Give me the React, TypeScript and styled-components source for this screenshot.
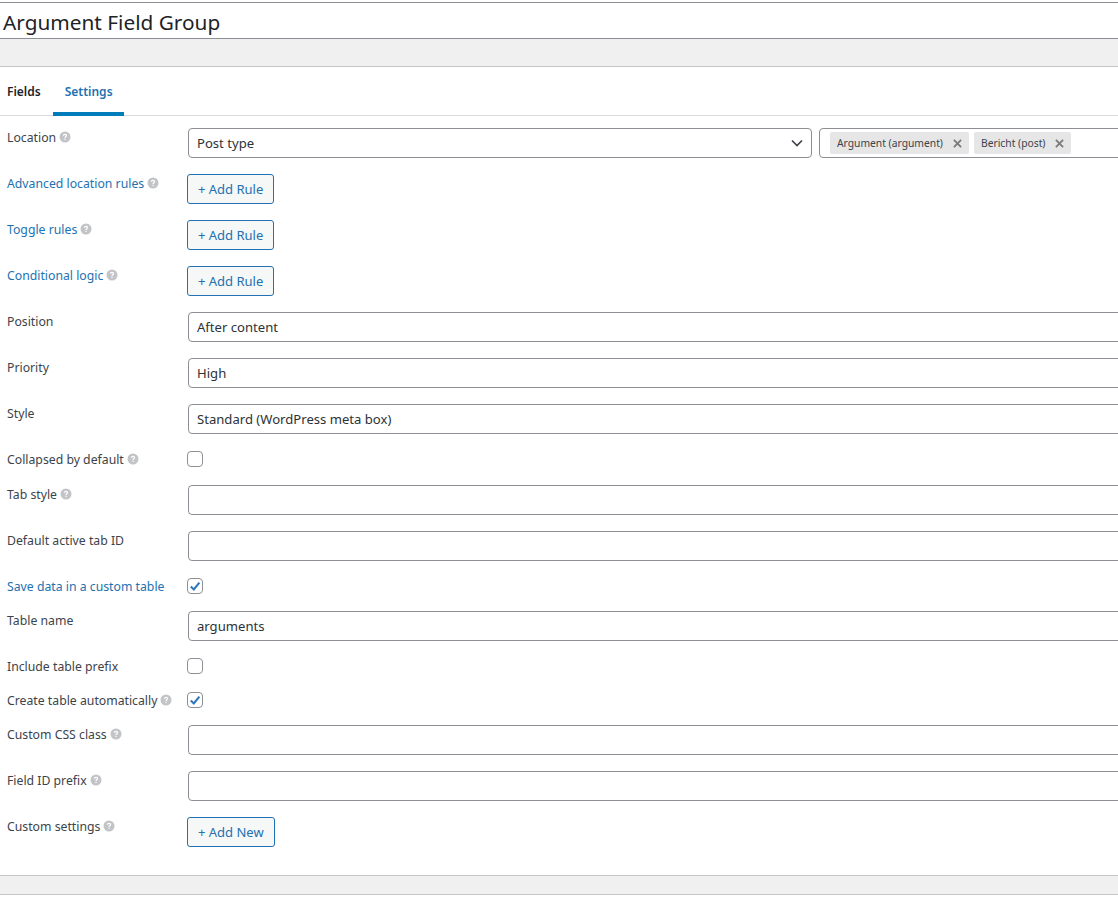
import React from "react";
import styled, { createGlobalStyle } from "styled-components";

const GlobalStyle = createGlobalStyle`
  html, body {
    margin: 0;
    padding: 0;
    background: #fff;
    overflow: hidden;
  }
  body {
    font-family: "Noto Sans", "Open Sans", sans-serif;
    font-size: 13px;
    color: #3c434a;
  }
`;

const Page = styled.div`
  width: 1118px;
  height: 898px;
  overflow: hidden;
  padding-top: 2px;
  box-sizing: border-box;
`;

const TitleBar = styled.header`
  height: 37px;
  box-sizing: border-box;
  border-top: 1px solid #8c8f94;
  border-bottom: 1px solid #8c8f94;
  padding: 2px 0 0 3px;
  display: flex;
  align-items: center;
`;

const Title = styled.h1`
  margin: 0;
  font-size: 20.8px;
  font-weight: 400;
  color: #1d2327;
  line-height: 32px;
`;

const Band = styled.div`
  height: 27px;
  background: #f0f0f0;
`;

const Panel = styled.section`
  border-top: 1px solid #c3c4c7;
  border-bottom: 1px solid #c3c4c7;
`;

const Tabs = styled.nav`
  display: flex;
  height: 49px;
  box-sizing: border-box;
  border-bottom: 1px solid #dcdcde;
`;

const Tab = styled.a<{ $active?: boolean }>`
  box-sizing: border-box;
  height: 49px;
  margin-bottom: -1px;
  padding: ${(p) => (p.$active ? "3px 11px 0 12px" : "3px 12px 0 7px")};
  display: flex;
  align-items: center;
  font-weight: 600;
  font-size: 12px;
  color: ${(p) => (p.$active ? "#2271b1" : "#1d2327")};
  border-bottom: 4px solid ${(p) => (p.$active ? "#007cba" : "transparent")};
`;

const Form = styled.div`
  padding: 12px 0 28px 0;
  display: flex;
  flex-direction: column;
  gap: 16px;
`;

const Row = styled.div<{ $height: number }>`
  display: grid;
  grid-template-columns: 188px 1fr;
  height: ${(p) => p.$height}px;
`;

const Label = styled.div<{ $link?: boolean }>`
  padding: 1px 0 0 7px;
  font-size: 12.25px;
  line-height: 18px;
  color: ${(p) => (p.$link ? "#2271b1" : "#3c434a")};
  display: flex;
  align-items: flex-start;
  gap: 3px;
  white-space: nowrap;
`;

const HelpDot = styled.svg`
  width: 12px;
  height: 12px;
  margin-top: 2px;
  flex: none;
`;

const Control = styled.div`
  display: flex;
  gap: 7px;
  min-width: 0;
`;

const TextField = styled.div`
  box-sizing: border-box;
  width: 960px;
  flex: none;
  height: 30px;
  border: 1px solid #8c8f94;
  border-radius: 4px;
  padding: 0 8px;
  font-size: 13.1px;
  line-height: 28px;
  color: #2c3338;
  background: #fff;
`;

const SelectBox = styled.div`
  box-sizing: border-box;
  width: 624px;
  flex: none;
  height: 30px;
  border: 1px solid #8c8f94;
  border-radius: 4px;
  padding: 0 8px;
  font-size: 13.1px;
  line-height: 28px;
  color: #2c3338;
  display: flex;
  justify-content: space-between;
  align-items: center;
`;

const Chevron = styled.svg`
  width: 14px;
  height: 14px;
  margin-right: -1px;
`;

const MultiBox = styled.div`
  box-sizing: border-box;
  flex: none;
  width: 320px;
  height: 30px;
  border: 1px solid #8c8f94;
  border-radius: 4px;
  padding: 3px 10px;
  display: flex;
  gap: 5px;
`;

const Chip = styled.span`
  height: 22px;
  background: #e6e6e6;
  border-radius: 2px;
  padding: 0 7px;
  display: flex;
  align-items: center;
  gap: 10px;
  font-size: 10.3px;
  color: #3c434a;
  white-space: nowrap;
`;

const ChipX = styled.svg`
  width: 9px;
  height: 9px;
`;

const AddButton = styled.button`
  margin-left: -1px;
  box-sizing: border-box;
  height: 30px;
  padding: 0 10px;
  border: 1px solid #2271b1;
  border-radius: 3px;
  background: #f6f7f7;
  color: #2271b1;
  font-family: inherit;
  font-size: 13px;
  line-height: 28px;
`;

const CheckBox = styled.span`
  box-sizing: border-box;
  display: flex;
  align-items: center;
  justify-content: center;
  width: 16px;
  height: 16px;
  margin-top: 1px;
  margin-left: -1px;
  border: 1px solid #8c8f94;
  border-radius: 4px;
  background: #fff;
`;

const Tick = styled.svg`
  width: 12px;
  height: 12px;
`;

const Footer = styled.div`
  height: 18px;
  background: #f0f0f0;
  border-bottom: 1px solid #c3c4c7;
`;

const Help = () => (
  <HelpDot viewBox="0 0 12 12">
    <circle cx="6" cy="6" r="5.5" fill="#c3c4c7" />
    <path
      d="M4.4 4.8c0-1 .7-1.5 1.6-1.5s1.6.5 1.6 1.3c0 1.2-1.6 1.2-1.6 2.4"
      fill="none"
      stroke="#fff"
      strokeWidth="1.2"
    />
    <rect x="5.4" y="7.8" width="1.2" height="1.2" fill="#fff" />
  </HelpDot>
);

const Caption = ({ text, link, help }: { text: string; link?: boolean; help?: boolean }) => (
  <Label $link={link}>
    {text}
    {help && <Help />}
  </Label>
);

const Check = ({ checked }: { checked?: boolean }) => (
  <CheckBox>
    {checked && (
      <Tick viewBox="0 0 12 12">
        <path d="M1.8 6.4 4.8 9.4 10.4 2.6" fill="none" stroke="#2f78bd" strokeWidth="2.1" />
      </Tick>
    )}
  </CheckBox>
);

const Remove = () => (
  <ChipX viewBox="0 0 10 10">
    <path d="M1 1 9 9M9 1 1 9" stroke="#7a7a7a" strokeWidth="2" />
  </ChipX>
);

export default function App() {
  return (
    <Page>
      <GlobalStyle />
      <TitleBar>
        <Title>Argument Field Group</Title>
      </TitleBar>
      <Band />
      <Panel>
        <Tabs>
          <Tab>Fields</Tab>
          <Tab $active>Settings</Tab>
        </Tabs>
        <Form>
          <Row $height={30}>
            <Caption text="Location" help />
            <Control>
              <SelectBox>
                Post type
                <Chevron viewBox="0 0 14 14">
                  <path d="M2 4.5 7 9.5 12 4.5" fill="none" stroke="#3c434a" strokeWidth="1.7" />
                </Chevron>
              </SelectBox>
              <MultiBox>
                <Chip>
                  Argument (argument) <Remove />
                </Chip>
                <Chip>
                  Bericht (post) <Remove />
                </Chip>
              </MultiBox>
            </Control>
          </Row>
          <Row $height={30}>
            <Caption text="Advanced location rules" link help />
            <Control>
              <AddButton>+ Add Rule</AddButton>
            </Control>
          </Row>
          <Row $height={30}>
            <Caption text="Toggle rules" link help />
            <Control>
              <AddButton>+ Add Rule</AddButton>
            </Control>
          </Row>
          <Row $height={30}>
            <Caption text="Conditional logic" link help />
            <Control>
              <AddButton>+ Add Rule</AddButton>
            </Control>
          </Row>
          <Row $height={30}>
            <Caption text="Position" />
            <TextField>After content</TextField>
          </Row>
          <Row $height={30}>
            <Caption text="Priority" />
            <TextField>High</TextField>
          </Row>
          <Row $height={30}>
            <Caption text="Style" />
            <TextField>Standard (WordPress meta box)</TextField>
          </Row>
          <Row $height={19}>
            <Caption text="Collapsed by default" help />
            <Check />
          </Row>
          <Row $height={30}>
            <Caption text="Tab style" help />
            <TextField />
          </Row>
          <Row $height={30}>
            <Caption text="Default active tab ID" />
            <TextField />
          </Row>
          <Row $height={18}>
            <Caption text="Save data in a custom table" link />
            <Check checked />
          </Row>
          <Row $height={30}>
            <Caption text="Table name" />
            <TextField>arguments</TextField>
          </Row>
          <Row $height={18}>
            <Caption text="Include table prefix" />
            <Check />
          </Row>
          <Row $height={18}>
            <Caption text="Create table automatically" help />
            <Check checked />
          </Row>
          <Row $height={30}>
            <Caption text="Custom CSS class" help />
            <TextField />
          </Row>
          <Row $height={30}>
            <Caption text="Field ID prefix" help />
            <TextField />
          </Row>
          <Row $height={30}>
            <Caption text="Custom settings" help />
            <Control>
              <AddButton>+ Add New</AddButton>
            </Control>
          </Row>
        </Form>
      </Panel>
      <Footer />
    </Page>
  );
}
